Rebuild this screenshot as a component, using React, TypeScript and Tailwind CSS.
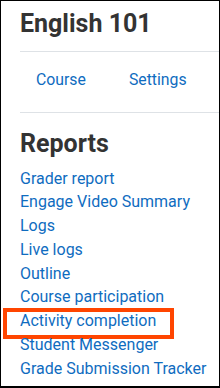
import React from "react";

const links = [
  "Grader report",
  "Engage Video Summary",
  "Logs",
  "Live logs",
  "Outline",
  "Course participation",
  "Activity completion",
  "Student Messenger",
  "Grade Submission Tracker",
];

export default function App() {
  return (
    <div
      className="w-[220px] h-[388px] overflow-hidden bg-white border-l border-t border-r-[1.5px] border-b-2 border-black box-border"
      style={{ fontFamily: "Roboto, 'Liberation Sans', sans-serif" }}
    >
      <div className="pl-[19px]">
        <h1 className="pt-[7.5px] text-[25px] leading-[30px] font-bold text-[#333333] whitespace-nowrap">
          English 101
        </h1>
        <div className="mt-[12px] h-px bg-[#dee2e6]" />
        <div className="flex pt-[18.5px] pb-[21.5px] text-[15.8px] leading-[20px] text-[#0f6cbf] whitespace-nowrap">
          <span className="pl-[16px]">Course</span>
          <span className="ml-[43px]">Settings</span>
        </div>
        <div className="h-px bg-[#dee2e6]" />
        <h2 className="pt-[16.5px] text-[25px] leading-[30px] font-bold text-[#333333] whitespace-nowrap">
          Reports
        </h2>
        <ul className="mt-[7.5px]">
          {links.map((l) => (
            <li
              key={l}
              className="relative text-[16px] leading-[23.8px] text-[#0f6cbf] whitespace-nowrap"
            >
              {l}
              {l === "Activity completion" && (
                <span className="absolute left-[-17px] top-[-1.5px] w-[171px] h-[31px] border-4 border-[#ff4500] box-border pointer-events-none" />
              )}
            </li>
          ))}
        </ul>
      </div>
    </div>
  );
}
